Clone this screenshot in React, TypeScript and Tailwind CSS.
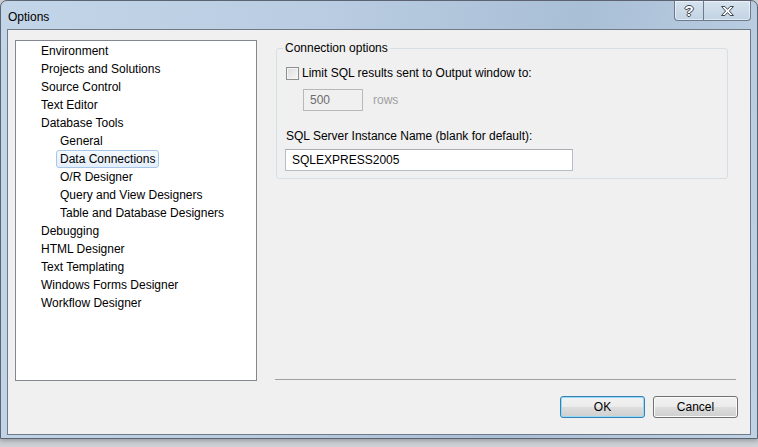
import React from 'react'

const font = "font-['Liberation_Sans',Arial,sans-serif]"

const treeItems: { label: string; level: number; selected?: boolean }[] = [
  { label: 'Environment', level: 0 },
  { label: 'Projects and Solutions', level: 0 },
  { label: 'Source Control', level: 0 },
  { label: 'Text Editor', level: 0 },
  { label: 'Database Tools', level: 0 },
  { label: 'General', level: 1 },
  { label: 'Data Connections', level: 1, selected: true },
  { label: 'O/R Designer', level: 1 },
  { label: 'Query and View Designers', level: 1 },
  { label: 'Table and Database Designers', level: 1 },
  { label: 'Debugging', level: 0 },
  { label: 'HTML Designer', level: 0 },
  { label: 'Text Templating', level: 0 },
  { label: 'Windows Forms Designer', level: 0 },
  { label: 'Workflow Designer', level: 0 },
]

function CloseGlyph() {
  return (
    <svg width="15" height="12" viewBox="0 0 15 12">
      <path
        d="M1.5 1.5h3.4L7.5 4.4 10.1 1.5h3.4L9.4 6l4.1 4.5h-3.4L7.5 7.6 4.9 10.5H1.5L5.6 6z"
        fill="#fff"
        stroke="#3e4652"
        strokeWidth="1"
        strokeLinejoin="round"
      />
    </svg>
  )
}

function WinButton({ children, isDefault }: { children: React.ReactNode; isDefault?: boolean }) {
  return (
    <button
      className={`w-[85px] h-[22px] rounded-[3px] border text-[12px] text-black bg-[linear-gradient(to_bottom,#f2f2f2_0%,#ebebeb_50%,#dddddd_51%,#cfcfcf_100%)] ${
        isDefault
          ? 'border-[#3c7fb1] shadow-[inset_0_0_0_1px_#8fdcfb]'
          : 'border-[#707070] shadow-[inset_0_0_0_1px_#fbfbfb]'
      }`}
    >
      {children}
    </button>
  )
}

export default function App() {
  return (
    <div className={`w-[758px] h-[447px] bg-[#cdd1d6] ${font} text-[12px] text-black`}>
      <div className="w-[758px] h-[439px] flex flex-col rounded-t-[7px] border border-[#5b6470] bg-[linear-gradient(100deg,#c3d5e8_0%,#b9cce1_40%,#a9bfd6_70%,#c0d2e5_100%)] shadow-[0_2px_4px_rgba(0,0,0,0.25)]">
        {/* title bar */}
        <div className="h-[28px] flex justify-between">
          <div className="pl-[7px] pt-[8px] leading-[16px] text-black">Options</div>
          <div className="flex self-start mr-[6px] h-[20px] border border-t-0 border-[#6b7a8c] rounded-b-[4px] bg-[linear-gradient(to_bottom,#d6e2ee,#c2d3e4)] shadow-[inset_0_0_0_1px_rgba(255,255,255,0.5)]">
            <div className="w-[29px] flex items-center justify-center border-r border-[#6b7a8c] font-bold text-[15px] leading-none text-white [text-shadow:1px_0_0_#3e4652,-1px_0_0_#3e4652,0_1px_0_#3e4652,0_-1px_0_#3e4652]">
              ?
            </div>
            <div className="w-[46px] flex items-center justify-center">
              <CloseGlyph />
            </div>
          </div>
        </div>

        {/* client area */}
        <div className="mx-[6px] h-[406px] flex flex-col border border-[#6f7a86] bg-[#f0f0f0]">
          <div className="flex pt-[10px] pl-[7px]">
            <div className="w-[242px] h-[341px] border border-[#828790] bg-white pt-[1px]">
              {treeItems.map((item) => (
                <div key={item.label} className="h-[18px] flex items-center">
                  <span
                    className={`h-[18px] flex items-center px-[3px] border rounded-[3px] ${
                      item.level === 0 ? 'ml-[21px]' : 'ml-[40px]'
                    } ${
                      item.selected
                        ? 'border-[#a8c6ea] bg-[linear-gradient(to_bottom,#f4f9fe,#e4eefb)]'
                        : 'border-transparent'
                    }`}
                  >
                    {item.label}
                  </span>
                </div>
              ))}
            </div>

            <div className="flex-1 flex flex-col ml-[18px]">
              <fieldset className="ml-[1px] w-[452px] border border-[#d5dfe5] rounded-[3px] pl-[6px] pb-[7px]">
                <legend className="px-[2px] leading-[16px]">Connection options</legend>
                <div className="mt-[9px] h-[16px] flex items-center">
                  <span className="ml-[3px] w-[13px] h-[13px] border border-[#8e8f8f] bg-[linear-gradient(135deg,#dcdcdc,#f8f8f8)] shadow-[inset_0_0_0_1px_#f4f4f4]" />
                  <span className="ml-[3px]">Limit SQL results sent to Output window to:</span>
                </div>
                <div className="mt-[8px] flex items-center">
                  <div className="ml-[20px] w-[60px] h-[22px] border border-[#b8b8b8] flex items-center pl-[6px] text-[#6d6d6d]">
                    500
                  </div>
                  <span className="ml-[10px] text-[#a0a0a0]">rows</span>
                </div>
                <div className="mt-[17px] h-[16px] flex items-center ml-[3px]">
                  SQL Server Instance Name (blank for default):
                </div>
                <div className="mt-[5px] ml-[2px] w-[288px] h-[22px] border border-[#b6bdc7] border-t-[#abadb3] bg-white flex items-center pl-[6px]">
                  SQLEXPRESS2005
                </div>
              </fieldset>
              <div className="mt-auto mb-[1px] mr-[14px] h-[1px] bg-[#a0a0a0]" />
            </div>
          </div>

          <div className="mt-[15px] pr-[12px] flex justify-end gap-[8px]">
            <WinButton isDefault>OK</WinButton>
            <WinButton>Cancel</WinButton>
          </div>
        </div>
      </div>
    </div>
  )
}
